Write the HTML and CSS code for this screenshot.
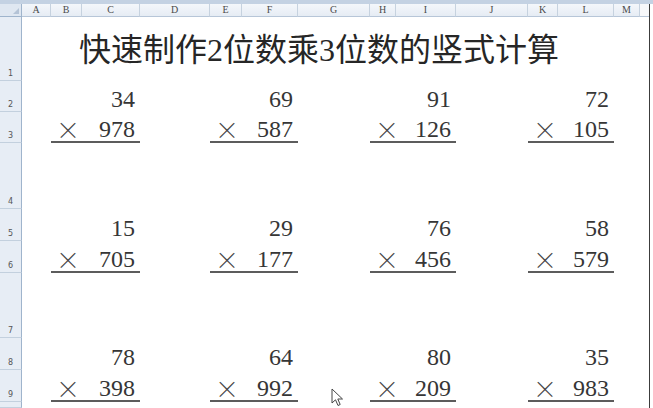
FILE: index.html
```html
<!DOCTYPE html>
<html lang="zh-CN">
<head>
<meta charset="utf-8">
<title>快速制作2位数乘3位数的竖式计算</title>
<link rel="stylesheet" href="styles.css">
</head>
<body>
<div class="window">
  <div class="topstrip"></div>
  <div class="sheet">
    <div class="colhead">
      <div class="corner"><span class="tri"></span></div>
      <div class="ch">A</div><div class="ch">B</div><div class="ch">C</div><div class="ch">D</div>
      <div class="ch">E</div><div class="ch">F</div><div class="ch">G</div><div class="ch">H</div>
      <div class="ch">I</div><div class="ch">J</div><div class="ch">K</div><div class="ch">L</div>
      <div class="ch">M</div><div class="ch filler"></div>
    </div>

    <div class="row h-title">
      <div class="rh">1</div>
      <div class="title">快速制作2位数乘3位数的竖式计算</div>
    </div>

    <div class="row h-top">
      <div class="rh">2</div>
      <div class="num k1">34</div><div class="num k2">69</div><div class="num k3">91</div><div class="num k4">72</div>
    </div>
    <div class="row h-eq">
      <div class="rh">3</div>
      <div class="eq e1"><span class="op">×</span><span class="val">978</span></div>
      <div class="eq e2"><span class="op">×</span><span class="val">587</span></div>
      <div class="eq e3"><span class="op">×</span><span class="val">126</span></div>
      <div class="eq e4"><span class="op">×</span><span class="val">105</span></div>
    </div>
    <div class="row h-gap1"><div class="rh">4</div></div>

    <div class="row h-top h-top2">
      <div class="rh">5</div>
      <div class="num k1">15</div><div class="num k2">29</div><div class="num k3">76</div><div class="num k4">58</div>
    </div>
    <div class="row h-eq h-eq2">
      <div class="rh">6</div>
      <div class="eq e1"><span class="op">×</span><span class="val">705</span></div>
      <div class="eq e2"><span class="op">×</span><span class="val">177</span></div>
      <div class="eq e3"><span class="op">×</span><span class="val">456</span></div>
      <div class="eq e4"><span class="op">×</span><span class="val">579</span></div>
    </div>
    <div class="row h-gap2"><div class="rh">7</div></div>

    <div class="row h-top h-top2">
      <div class="rh">8</div>
      <div class="num k1">78</div><div class="num k2">64</div><div class="num k3">80</div><div class="num k4">35</div>
    </div>
    <div class="row h-eq h-eq2">
      <div class="rh">9</div>
      <div class="eq e1"><span class="op">×</span><span class="val">398</span></div>
      <div class="eq e2"><span class="op">×</span><span class="val">992</span></div>
      <div class="eq e3"><span class="op">×</span><span class="val">209</span></div>
      <div class="eq e4"><span class="op">×</span><span class="val">983</span></div>
    </div>
    <div class="row h-rest"><div class="rh"></div></div>
  </div>
  <svg class="cursor" width="13" height="19" viewBox="0 0 13 19">
    <path d="M1 1 L1 15 L4.5 11.8 L7 17.5 L9.2 16.5 L6.8 11 L11.5 11 Z" fill="#fff" stroke="#444" stroke-width="1" stroke-linejoin="round"/>
  </svg>
</div>
</body>
</html>
```

FILE: styles.css
```css
* { box-sizing: border-box; }
html, body { margin: 0; padding: 0; background: #fff; }
body { font-family: "Liberation Serif", "Noto Sans CJK SC", serif; }

.window {
  position: relative;
  width: 653px;
  height: 408px;
  overflow: hidden;
  background: #fff;
}

.topstrip {
  height: 4px;
  background: #c4d2e3;
}

.sheet {
  --cols: 22px 29px 31px 58px 70px 32px 56px 72px 26px 60px 72px 30px 56px 26px 9px;
  width: 650px;
  height: 404px;
  border-right: 1px solid #3c3c3c;
  display: flex;
  flex-direction: column;
}

.colhead {
  display: grid;
  grid-template-columns: var(--cols);
  height: 13px;
  flex: none;
}
.corner {
  background: #dfe7f1;
  border-right: 1px solid #9fb4cc;
  border-bottom: 1px solid #9fb4cc;
  position: relative;
}
.tri {
  position: absolute;
  right: 2px;
  bottom: 2px;
  width: 0;
  height: 0;
  border-left: 6px solid transparent;
  border-bottom: 6px solid #b4c3d6;
}
.ch {
  background: linear-gradient(#f4f7fb, #e6ecf4);
  border-right: 1px solid #c6d2df;
  border-bottom: 1px solid #b7c6d8;
  font-family: "Liberation Serif", serif;
  font-size: 10px;
  line-height: 12px;
  color: #4a4a4a;
  text-align: center;
}
.ch.filler {
  background: #f7f8fa;
  border-right: none;
}

.row {
  display: grid;
  grid-template-columns: var(--cols);
  flex: none;
}
.h-title { height: 64px; }
.h-top { height: 31px; }
.h-eq { height: 31px; }
.h-top2 { height: 32px; }
.h-eq2 { height: 32px; }
.h-gap1 { height: 66px; }
.h-gap2 { height: 65px; }
.h-rest { flex: 1; }

.rh {
  grid-column: 1;
  grid-row: 1;
  background: #e7edf5;
  border-right: 1px solid #9fb4cc;
  border-bottom: 1px solid #c3d0de;
  font-family: "DejaVu Sans", sans-serif;
  font-size: 8px;
  color: #555;
  display: flex;
  align-items: flex-end;
  justify-content: center;
  padding-bottom: 2px;
}

.title {
  grid-column: 2 / 15;
  grid-row: 1;
  padding-left: 57px;
  padding-top: 17px;
  font-family: "Liberation Serif", "Noto Sans CJK SC", serif;
  font-size: 32px;
  line-height: 32px;
  color: #262626;
  white-space: nowrap;
}

.num, .eq {
  grid-row: 1;
  font-family: "Liberation Serif", serif;
  font-size: 24px;
  line-height: 24px;
  color: #363636;
  align-self: end;
}
.num {
  text-align: right;
  padding-right: 5px;
  padding-bottom: 1px;
}
.k1 { grid-column: 4; }
.k2 { grid-column: 7; }
.k3 { grid-column: 10; }
.k4 { grid-column: 13; }

.eq {
  display: flex;
  justify-content: space-between;
  align-items: flex-end;
  padding: 0 5px 0 5px;
  border-bottom: 2px solid #5c5c5c;
  height: 100%;
}
.e1 { grid-column: 3 / 5; }
.e2 { grid-column: 6 / 8; }
.e3 { grid-column: 9 / 11; }
.e4 { grid-column: 12 / 14; }

.op {
  font-family: "Noto Sans CJK SC", sans-serif;
  font-weight: 300;
  font-size: 24px;
  line-height: 24px;
  color: #444;
}
.val {
  line-height: 24px;
}

.cursor {
  position: absolute;
  left: 331px;
  top: 388px;
}
```
